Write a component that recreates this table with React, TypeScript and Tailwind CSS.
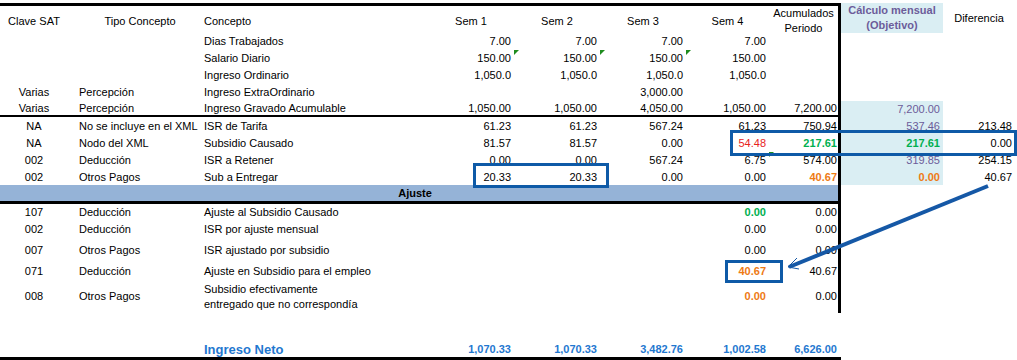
import React from "react";

const G = ({ children }: { children: React.ReactNode }) => <span className="font-bold text-[#00b050]">{children}</span>;
const O = ({ children }: { children: React.ReactNode }) => <span className="font-bold text-[#ee7a14]">{children}</span>;
const R = ({ children }: { children: React.ReactNode }) => <span className="text-[#e8231c]">{children}</span>;
const P = ({ children }: { children: React.ReactNode }) => <span className="text-[#6c5c9a]">{children}</span>;
const B = ({ children }: { children: React.ReactNode }) => <span className="font-bold text-[#1f78d0]">{children}</span>;

function Tri() {
  return <span className="absolute left-0 top-0 h-0 w-0 border-r-[5px] border-t-[5px] border-r-transparent border-t-[#1e8c1e]" />;
}

type RowProps = {
  h: string;
  a?: React.ReactNode;
  b?: React.ReactNode;
  c?: React.ReactNode;
  s?: React.ReactNode[];
  acum?: React.ReactNode;
  calc?: React.ReactNode;
  dif?: React.ReactNode;
  calcBg?: boolean;
  tri?: number[];
  acumTri?: boolean;
  leftExtra?: string;
  vline?: boolean;
};

function Row({ h, a, b, c, s = [], acum, calc, dif, calcBg, tri = [], acumTri, leftExtra = "", vline = true }: RowProps) {
  return (
    <div className={`flex ${h}`}>
      <div className={`w-[841px] shrink-0 border-black ${vline ? "border-r-[3px]" : ""} ${leftExtra}`}>
        <div className="grid h-full grid-cols-[68px_132px_228px_86px_86px_86px_83px_69px]">
          <div className="flex items-center justify-center">{a}</div>
          <div className="flex items-center whitespace-nowrap pl-[11px]">{b}</div>
          <div className="flex items-center whitespace-nowrap pl-[4px]">{c}</div>
          {[0, 1, 2, 3].map((i) => (
            <div key={i} className="relative flex items-center justify-end pr-[3px]">
              {tri.includes(i) && <Tri />}
              {s[i]}
            </div>
          ))}
          <div className="relative flex items-center justify-end pr-[1px]">
            {acumTri && <Tri />}
            {acum}
          </div>
        </div>
      </div>
      <div className="grid grid-cols-[102px_72px]">
        <div className={`flex items-center justify-end pr-[3px] ${calcBg ? "bg-[#daeef3]" : ""}`}>{calc}</div>
        <div className="flex items-center justify-end pr-[3px]">{dif}</div>
      </div>
    </div>
  );
}

export default function App() {
  return (
    <div className="relative h-[360px] w-[1017px] overflow-hidden bg-white pt-[3px] font-['Liberation_Sans',Arial,sans-serif] text-[11px] leading-none text-black">
      {/* Header */}
      <div className="flex h-[30px]">
        <div className="w-[841px] shrink-0 border-r-[3px] border-t-[3px] border-black">
          <div className="grid h-full grid-cols-[68px_132px_228px_86px_86px_86px_83px_69px]">
            <div className="flex items-center justify-center">Clave SAT</div>
            <div className="flex items-center justify-center pl-[12px]">Tipo Concepto</div>
            <div className="flex items-center pl-[4px]">Concepto</div>
            <div className="flex items-center justify-center">Sem 1</div>
            <div className="flex items-center justify-center">Sem 2</div>
            <div className="flex items-center justify-center">Sem 3</div>
            <div className="flex items-center justify-center">Sem 4</div>
            <div className="flex items-center justify-center text-center leading-[15px]">
              Acumulados
              <br />
              Periodo
            </div>
          </div>
        </div>
        <div className="grid grid-cols-[102px_72px]">
          <div className="flex items-center justify-center bg-[#daeef3] text-center font-bold leading-[15px] text-[#6c5c9a]">
            Cálculo mensual
            <br />
            (Objetivo)
          </div>
          <div className="flex items-center justify-center">Diferencia</div>
        </div>
      </div>

      <Row h="h-[17px]" c="Dias Trabajados" s={["7.00", "7.00", "7.00", "7.00"]} />
      <Row h="h-[17px]" c="Salario Diario" s={["150.00", "150.00", "150.00", "150.00"]} tri={[1, 2, 3]} />
      <Row h="h-[17px]" c="Ingreso Ordinario" s={["1,050.0", "1,050.0", "1,050.0", "1,050.0"]} />
      <Row h="h-[17px]" a="Varias" b="Percepción" c="Ingreso ExtraOrdinario" s={["", "", "3,000.00", ""]} />
      <Row
        h="h-[16px]"
        leftExtra="border-b-2"
        a="Varias"
        b="Percepción"
        c="Ingreso Gravado Acumulable"
        s={["1,050.00", "1,050.00", "4,050.00", "1,050.00"]}
        acum="7,200.00"
        calc={<P>7,200.00</P>}
        calcBg
      />
      <Row
        h="h-[18px]"
        a="NA"
        b="No se incluye en el XML"
        c="ISR de Tarifa"
        s={["61.23", "61.23", "567.24", "61.23"]}
        acum="750.94"
        calc={<P>537.46</P>}
        calcBg
        dif="213.48"
      />
      <Row
        h="h-[17px]"
        a="NA"
        b="Nodo del XML"
        c="Subsidio Causado"
        s={["81.57", "81.57", "0.00", <R key="r">54.48</R>]}
        acum={<G>217.61</G>}
        calc={<G>217.61</G>}
        calcBg
        dif="0.00"
      />
      <Row
        h="h-[17px]"
        a="002"
        b="Deducción"
        c="ISR a Retener"
        s={["0.00", "0.00", "567.24", "6.75"]}
        acum="574.00"
        acumTri
        calc={<P>319.85</P>}
        calcBg
        dif="254.15"
      />
      <Row
        h="h-[16px]"
        a="002"
        b="Otros Pagos"
        c="Sub a Entregar"
        s={["20.33", "20.33", "0.00", "0.00"]}
        acum={<O>40.67</O>}
        calc={<O>0.00</O>}
        calcBg
        dif="40.67"
      />

      {/* Ajuste band */}
      <div className="flex h-[19px]">
        <div className="flex w-[841px] shrink-0 items-center justify-center border-b-[3px] border-r-[3px] border-black bg-[#95b3d7] pr-[8px] font-bold">
          Ajuste
        </div>
      </div>

      <Row h="h-[17px]" a="107" b="Deducción" c="Ajuste al Subsidio Causado" s={["", "", "", <G key="g">0.00</G>]} acum="0.00" />
      <Row h="h-[17px]" a="002" b="Deducción" c="ISR por ajuste mensual" s={["", "", "", "0.00"]} acum="0.00" />
      <Row h="h-[24px]" a="007" b="Otros Pagos" c="ISR ajustado por subsidio" s={["", "", "", "0.00"]} acum="0.00" />
      <Row h="h-[18px]" a="071" b="Deducción" c="Ajuste en Subsidio para el empleo" s={["", "", "", <O key="o">40.67</O>]} acum="40.67" />
      <Row
        h="h-[33px]"
        a="008"
        b="Otros Pagos"
        c={
          <div className="leading-[15px]">
            Subsidio efectivamente
            <br />
            entregado que no correspondía
          </div>
        }
        s={["", "", "", <O key="o">0.00</O>]}
        acum="0.00"
      />

      {/* spacer */}
      <div className="h-[28px] w-[841px]" />

      <Row
        h="h-[19px]"
        vline={false}
        leftExtra="border-b-[3px]"
        c={<span className="text-[13px] font-bold text-[#1f78d0]">Ingreso Neto</span>}
        s={[<B key="1">1,070.33</B>, <B key="2">1,070.33</B>, <B key="3">3,482.76</B>, <B key="4">1,002.58</B>]}
        acum={<B>6,626.00</B>}
      />

      {/* Overlays: highlight boxes and arrow */}
      <div className="pointer-events-none absolute left-[473px] top-[163px] h-[25px] w-[136px] border-[3px] border-[#0e5aa7]" />
      <div className="pointer-events-none absolute left-[730px] top-[130px] h-[26px] w-[287px] border-[3px] border-[#0e5aa7]" />
      <div className="pointer-events-none absolute left-[725px] top-[260px] h-[23px] w-[58px] border-[3px] border-[#0e5aa7]" />
      <svg className="pointer-events-none absolute left-0 top-0" width="1017" height="360" viewBox="0 0 1017 360">
        <line x1="988" y1="186" x2="789" y2="267" stroke="#1558a6" strokeWidth="4" />
        <polyline points="797,258 788,267 799,269" fill="none" stroke="#1558a6" strokeWidth="1" />
      </svg>
    </div>
  );
}
